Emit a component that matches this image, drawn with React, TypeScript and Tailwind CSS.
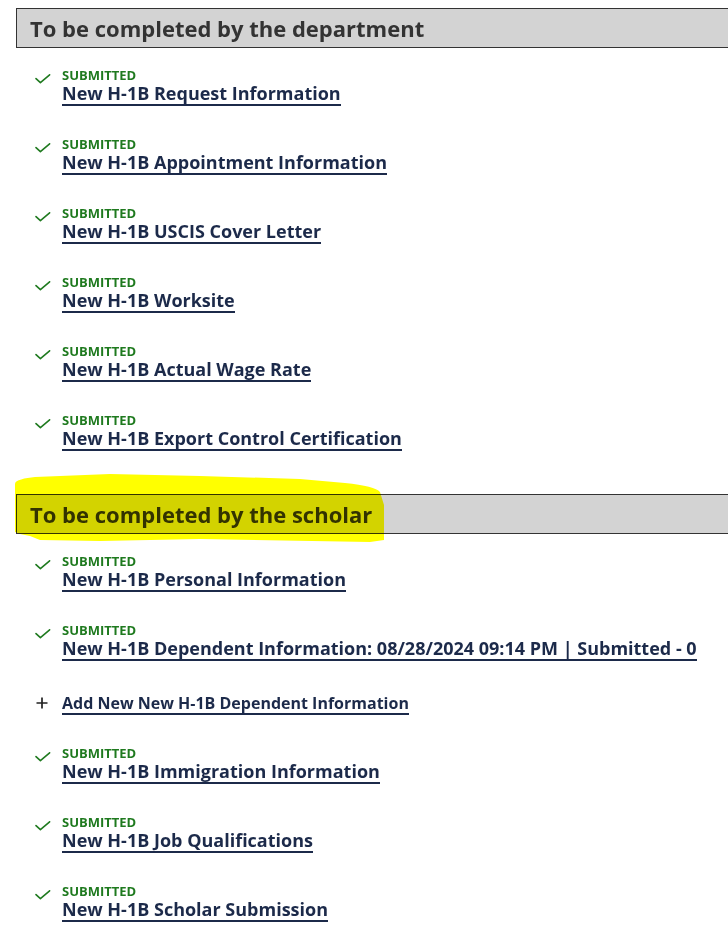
import React from "react";

type Item =
  | { kind: "done"; title: string }
  | { kind: "add"; title: string };

const departmentItems: Item[] = [
  { kind: "done", title: "New H-1B Request Information" },
  { kind: "done", title: "New H-1B Appointment Information" },
  { kind: "done", title: "New H-1B USCIS Cover Letter" },
  { kind: "done", title: "New H-1B Worksite" },
  { kind: "done", title: "New H-1B Actual Wage Rate" },
  { kind: "done", title: "New H-1B Export Control Certification" },
];

const scholarItems: Item[] = [
  { kind: "done", title: "New H-1B Personal Information" },
  { kind: "done", title: "New H-1B Dependent Information: 08/28/2024 09:14 PM | Submitted - 0" },
  { kind: "add", title: "Add New New H-1B Dependent Information" },
  { kind: "done", title: "New H-1B Immigration Information" },
  { kind: "done", title: "New H-1B Job Qualifications" },
  { kind: "done", title: "New H-1B Scholar Submission" },
];

function CheckIcon() {
  return (
    <svg width="16" height="10" viewBox="0 0 16 10" className="block">
      <polyline
        points="1,4.6 5.4,8.6 14.6,0.8"
        fill="none"
        stroke="#1f7a1f"
        strokeWidth="1.6"
        strokeLinecap="round"
        strokeLinejoin="round"
      />
    </svg>
  );
}

function PlusIcon() {
  return (
    <svg width="12" height="12" viewBox="0 0 12 12" className="block">
      <path d="M6 0.5v11M0.5 6h11" stroke="#222" strokeWidth="1.7" />
    </svg>
  );
}

function TaskRow({ item }: { item: Item }) {
  if (item.kind === "add") {
    return (
      <li className="flex">
        <div className="w-[27px] shrink-0 pt-[4px] pl-[1px]">
          <PlusIcon />
        </div>
        <a
          href="#"
          className="border-b-2 border-[#1c2a4a] text-[16px] leading-[20px] font-bold text-[#1c2a4a]"
        >
          {item.title}
        </a>
      </li>
    );
  }
  return (
    <li className="flex">
      <div className="w-[27px] shrink-0 pt-[5px]">
        <CheckIcon />
      </div>
      <div className="flex flex-col items-start">
        <span className="text-[13px] leading-[13px] font-bold text-[#1f7a1f]">SUBMITTED</span>
        <a
          href="#"
          className="border-b-2 border-[#1c2a4a] text-[18px] leading-[22px] font-bold text-[#1c2a4a]"
        >
          {item.title}
        </a>
      </div>
    </li>
  );
}

function Section({ heading, items }: { heading: string; items: Item[] }) {
  return (
    <section>
      <div className="h-10 border border-r-0 border-[#333] bg-[#d3d3d3] pl-[13px] flex items-center">
        <h2 className="text-[22px] leading-[28px] font-bold text-[#333]">{heading}</h2>
      </div>
      <ul className="mt-[21px] pl-[19px] flex flex-col gap-[32px]">
        {items.map((it) => (
          <TaskRow key={it.title} item={it} />
        ))}
      </ul>
    </section>
  );
}

export default function App() {
  return (
    <div className="relative min-h-[949px] w-[728px] overflow-hidden bg-white pt-2 pl-4 font-['Open_Sans',sans-serif]">
      <div className="flex flex-col gap-[43px]">
        <Section heading="To be completed by the department" items={departmentItems} />
        <Section heading="To be completed by the scholar" items={scholarItems} />
      </div>
      {/* marker stroke over the scholar heading */}
      <svg
        className="pointer-events-none absolute left-0 top-[470px] mix-blend-multiply"
        width="400"
        height="80"
        viewBox="0 470 400 80"
      >
        <path
          d="M15,484 C15,480 25,478 35,477 L110,474 L200,476 L300,479 L345,483 Q375,486 380,492 L384,505 L384,540 L370,542 L200,539 L100,541 L40,540 L30,536 L20,534 L15,532 Z"
          fill="#ffff00"
        />
      </svg>
    </div>
  );
}
